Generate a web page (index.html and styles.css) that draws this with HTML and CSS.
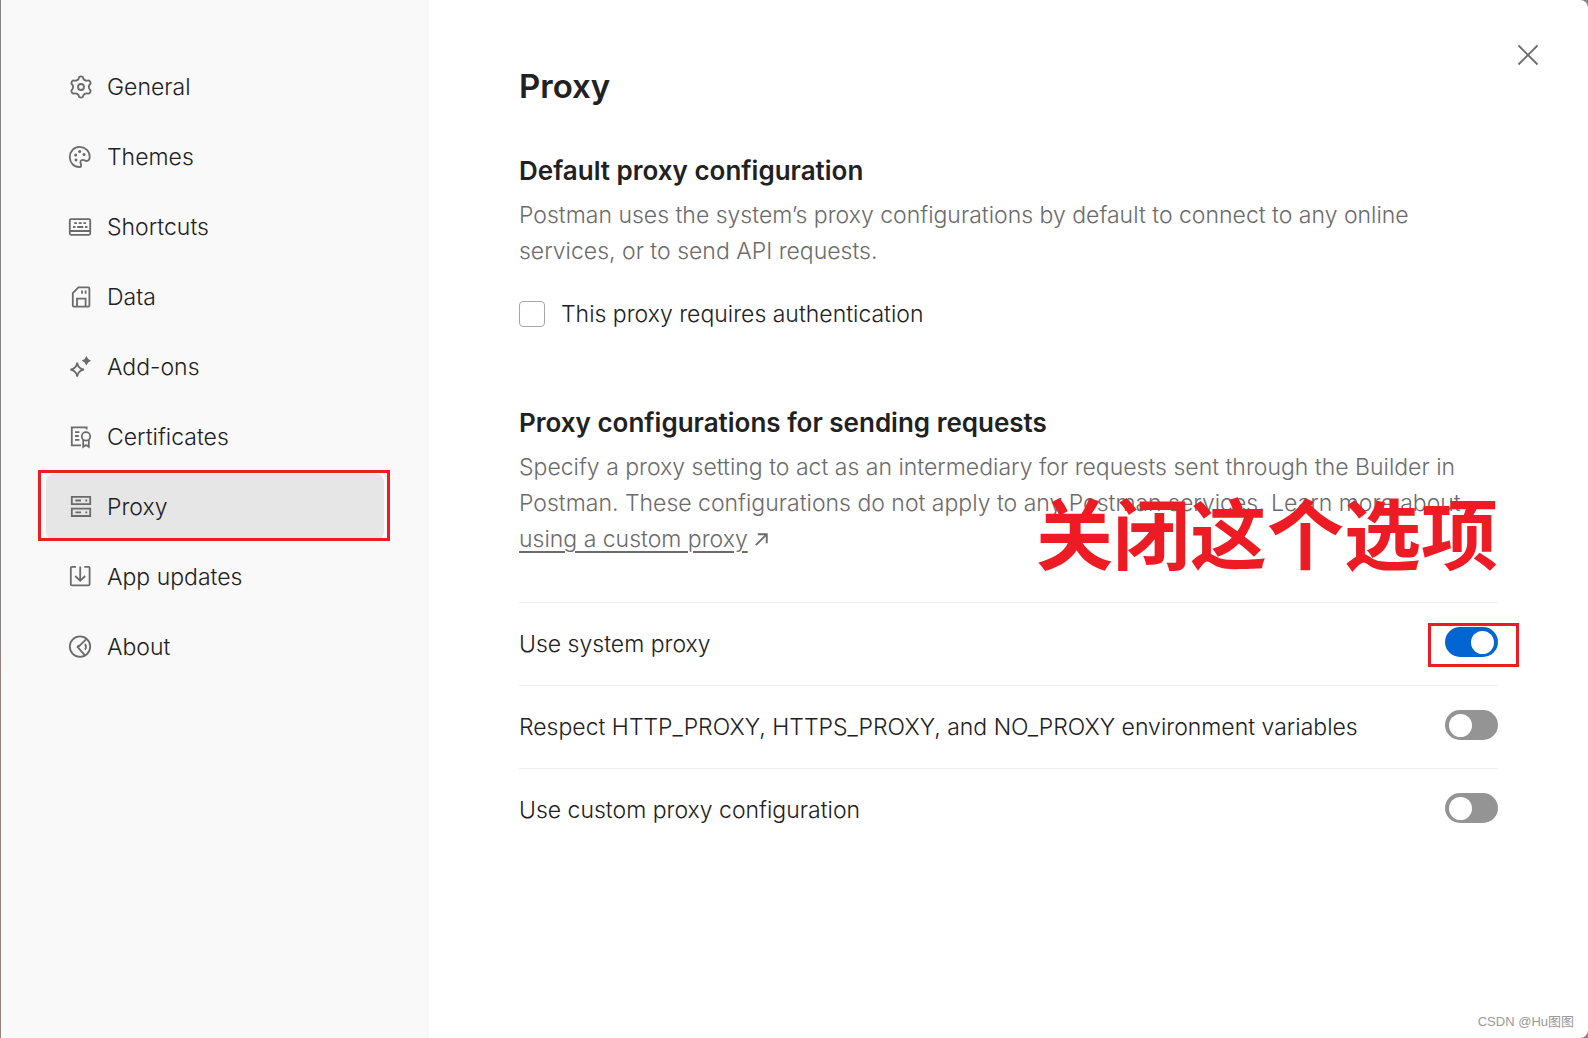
FILE: index.html
```html
<!DOCTYPE html>
<html lang="en">
<head>
  <meta charset="UTF-8" />
  <meta name="viewport" content="width=device-width, initial-scale=1.0"/>
  <title>Settings - Proxy</title>
  <link rel="stylesheet" href="styles.css">
</head>
<body>

  <div class="settings">
    <nav class="sidebar">
      <a class="nav-item" href="#general">
        <svg class="icon" viewBox="0 0 24 24">
          <path d="M11.2 2Q13 .8 14.8 2Q15.6 6.6 20.8 5.4Q22.8 6.4 22.6 8.5Q19 12 22.6 15.5Q22.8 17.6 20.8 18.6Q15.6 17.4 14.8 22Q13 23.2 11.2 22Q10.4 17.4 5.2 18.6Q3.2 17.6 3.4 15.5Q7 12 3.4 8.5Q3.2 6.4 5.2 5.4Q10.4 6.6 11.2 2Z"/>
          <circle cx="13" cy="12" r="3"/>
        </svg>
        <span>General</span>
      </a>
      <a class="nav-item" href="#themes">
        <svg class="icon" viewBox="0 0 24 24">
          <path d="M11.5 22C5.5 22 1.8 17.5 1.8 12S6 1.8 11.5 1.8S21.7 6 21.7 11.5C21.7 14.5 20.3 16 18.5 16C17 16 16.8 14.8 15 14.8C12.4 14.8 12 17 12.8 18.8C13.6 20.6 13.2 22 11.5 22Z"/>
          <g class="solid"><circle cx="7.7" cy="10" r="1.5"/><circle cx="11.6" cy="6.6" r="1.5"/><circle cx="16" cy="9.4" r="1.5"/><circle cx="8" cy="15" r="1.5"/></g>
        </svg>
        <span>Themes</span>
      </a>
      <a class="nav-item" href="#shortcuts">
        <svg class="icon" viewBox="0 0 24 24">
          <rect x="1.8" y="4.2" width="20.4" height="15.6" rx="1.2"/>
          <path d="M2 16H22M6.2 8.2H9M10.7 8.2H13.7M15.4 8.2H18M5 12H7.4M9.2 12H15.2M17 12H19.4"/>
        </svg>
        <span>Shortcuts</span>
      </a>
      <a class="nav-item" href="#data">
        <svg class="icon" viewBox="0 0 24 24">
          <path d="M10.4 2.4H20.4Q21.4 2.4 21.4 3.4V20.4Q21.4 21.6 20.4 21.6H6Q4.8 21.6 4.8 20.4V8ZM9 21V13.6H17.6V21M14 5.6V8.8M17.6 5.6V8.8"/>
        </svg>
        <span>Data</span>
      </a>
      <a class="nav-item" href="#addons">
        <svg class="icon" viewBox="0 0 24 24">
          <path d="M9.2 7.6Q10 13.8 16 14.6Q10 15.4 9.2 21.6Q8.4 15.4 2.4 14.6Q8.4 13.8 9.2 7.6Z"/>
          <path class="solid" d="M18.4 1Q19.6 4.4 23 5.7Q19.6 7 18.4 10.4Q17.2 7 13.8 5.7Q17.2 4.4 18.4 1Z"/>
        </svg>
        <span>Add-ons</span>
      </a>
      <a class="nav-item" href="#certificates">
        <svg class="icon" viewBox="0 0 24 24">
          <path d="M18.6 4.6V2.4H3.8V20.4H13M7 7.2H11.4M7 11H10.8M7 14.8H11.4M15.2 14.8V21.8L18 20L20.8 21.8V14.8"/>
          <circle cx="18" cy="11.4" r="4.2"/>
        </svg>
        <span>Certificates</span>
      </a>
      <a class="nav-item active" href="#proxy" aria-current="page">
        <svg class="icon" viewBox="0 0 24 24">
          <path d="M3.8 1.8H22.2V9.2H3.8ZM3.8 13.6H22.2V21H3.8ZM7.4 5.5H13M17.4 5.5H19.2M7.4 17.3H13M17.4 17.3H19.2"/>
        </svg>
        <span>Proxy</span>
      </a>
      <a class="nav-item" href="#updates">
        <svg class="icon" viewBox="0 0 24 24">
          <path d="M8 1.8H4Q2.8 1.8 2.8 3V19.2Q2.8 20.4 4 20.4H20.4Q21.6 20.4 21.6 19.2V3Q21.6 1.8 20.4 1.8H16.4M12.2 1.4V15.6M7.2 11L12.2 15.8L17.2 11"/>
        </svg>
        <span>App updates</span>
      </a>
      <a class="nav-item" href="#about">
        <svg class="icon" viewBox="0 0 24 24">
          <circle cx="12" cy="11.6" r="10.2"/>
          <path d="M18.4 4.2L9.8 12.4L16.8 20.2M9.8 12.4V11.4L11 10.6M17 9Q19 12 17 14.6"/>
        </svg>
        <span>About</span>
      </a>
    </nav>

    <main class="content">
      <button class="close" type="button" aria-label="Close">
        <svg class="icon" viewBox="0 0 24 24"><path d="M2.5 2.5L21.5 21.5M21.5 2.5L2.5 21.5"/></svg>
      </button>

      <h1>Proxy</h1>

      <section class="block">
        <h2>Default proxy configuration</h2>
        <p>Postman uses the system’s proxy configurations by default to connect to any online services, or to send API requests.</p>
        <label class="check">
          <input type="checkbox">
          <span>This proxy requires authentication</span>
        </label>
      </section>

      <section class="block">
        <h2>Proxy configurations for sending requests</h2>
        <div class="description">
          <p>Specify a proxy setting to act as an intermediary for requests sent through the Builder in Postman. These configurations do not apply to any Postman services. Learn more about <a href="#custom">using a custom proxy</a>
            <svg class="link-arrow" viewBox="0 0 16 16"><path d="M2 14L13.4 2.6M4 2.4H13.6V12"/></svg></p>
          <div class="note" lang="zh">关闭这个选项</div>
        </div>

        <div class="options">
          <div class="option">
            <label for="system">Use system proxy</label>
            <span class="switch marked"><input type="checkbox" role="switch" id="system" checked></span>
          </div>
          <div class="option">
            <label for="env">Respect HTTP_PROXY, HTTPS_PROXY, and NO_PROXY environment variables</label>
            <span class="switch"><input type="checkbox" role="switch" id="env"></span>
          </div>
          <div class="option">
            <label for="custom">Use custom proxy configuration</label>
            <span class="switch"><input type="checkbox" role="switch" id="custom"></span>
          </div>
        </div>
      </section>

      <div class="watermark">CSDN @Hu图图</div>
    </main>
  </div>

</body>
</html>
```
FILE: styles.css
```css
* {
  box-sizing: border-box;
}

body {
  margin: 0;
  font-family: 'Inter', 'Noto Sans CJK SC', sans-serif;
  font-size: 23px;
  font-weight: 300;
  line-height: 36px;
  color: #212121;
  background: linear-gradient(#858585 60%, #8f8280 65%);
}

.settings {
  display: flex;
  min-height: 100vh;
  margin-left: 1px;
  background: #fff;
  border-radius: 0 8px 8px 0;
  overflow: hidden;
}

/* sidebar */
.sidebar {
  flex: 0 0 428px;
  display: flex;
  flex-direction: column;
  gap: 4px;
  padding: 54px 45px 40px;
  background: #f9f9f9;
}

.nav-item {
  position: relative;
  display: flex;
  align-items: center;
  gap: 15px;
  height: 66px;
  padding: 0 22px;
  border-radius: 8px;
  color: #212121;
  text-decoration: none;
}

.nav-item.active {
  background: #e6e6e6;
}

.nav-item.active::after {
  content: "";
  position: absolute;
  inset: -4px -6px -1px -8px;
  border: 3px solid #ed1c24;
}

.icon {
  width: 24px;
  height: 24px;
  fill: none;
  stroke: #6b6b6b;
  stroke-width: 1.8;
}

.solid {
  fill: #6b6b6b;
  stroke: none;
}

/* content */
.content {
  position: relative;
  flex: 1;
  min-width: 0;
  padding: 64px 90px 40px;
}

.close {
  position: absolute;
  top: 43px;
  right: 48px;
  display: flex;
  padding: 0;
  border: none;
  background: none;
  cursor: pointer;
}

h1 {
  margin: 0 0 45px;
  font-size: 33px;
  line-height: 44px;
  font-weight: 600;
}

h2 {
  margin: 0 0 8px;
  font-size: 26px;
  line-height: 36px;
  font-weight: 600;
}

p {
  margin: 0;
  color: #6b6b6b;
}

p a {
  color: inherit;
  text-decoration-thickness: 2px;
  text-underline-offset: 4px;
}

.block {
  margin-bottom: 73px;
}

.check {
  display: flex;
  align-items: center;
  gap: 16px;
  margin-top: 27px;
}

.check input {
  appearance: none;
  width: 26px;
  height: 26px;
  margin: 0;
  border: 1px solid #a6a6a6;
  border-radius: 4px;
  background: #fff;
}

.description {
  position: relative;
}

.link-arrow {
  width: 15px;
  height: 15px;
  fill: none;
  stroke: #6b6b6b;
  stroke-width: 2;
}

.note {
  position: absolute;
  right: 0;
  bottom: -24px;
  font-family: 'Noto Sans CJK SC', sans-serif;
  font-size: 77px;
  line-height: 100px;
  font-weight: 700;
  color: #ed1c24;
  white-space: nowrap;
}

.options {
  margin-top: 45px;
}

.option {
  display: flex;
  align-items: center;
  justify-content: space-between;
  height: 83px;
  border-top: 1px solid #ededed;
}

.switch {
  position: relative;
  display: flex;
  margin-bottom: 4px;
}

.switch input {
  appearance: none;
  display: flex;
  align-items: center;
  width: 53px;
  height: 30px;
  margin: 0;
  padding: 0 4px;
  border-radius: 15px;
  background: #949494;
}

.switch input::before {
  content: "";
  width: 23px;
  height: 23px;
  border-radius: 50%;
  background: #fff;
}

.switch input:checked {
  justify-content: flex-end;
  background: #0265d2;
}

.switch.marked::after {
  content: "";
  position: absolute;
  inset: -4px -21px -10px -17px;
  border: 3px solid #ed1c24;
}

.watermark {
  position: absolute;
  right: 14px;
  bottom: 6px;
  font-family: 'Liberation Sans', 'Noto Sans CJK SC', sans-serif;
  font-size: 13px;
  font-weight: 400;
  line-height: 20px;
  color: #999;
}
```
